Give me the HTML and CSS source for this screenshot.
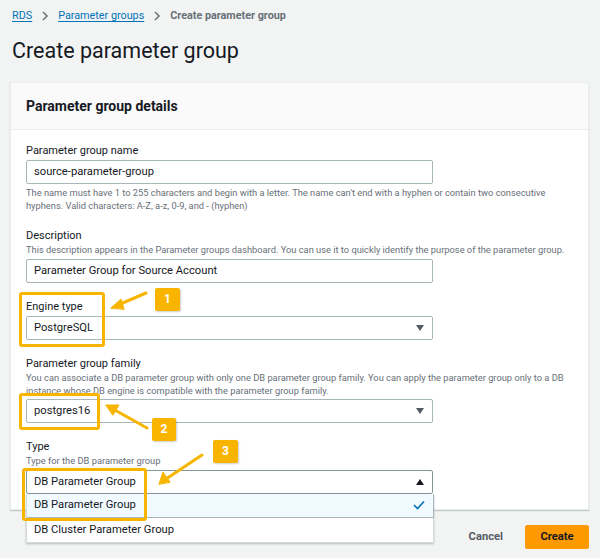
FILE: index.html
```html
<!DOCTYPE html>
<html>
<head>
<meta charset="utf-8">
<link rel="stylesheet" href="styles.css">
</head>
<body>
<div class="page">
  <nav class="crumbs">
    <a class="crumb-link">RDS</a>
    <svg class="chev" width="10" height="10" viewBox="0 0 10 10"><path d="M3 1 L7 5 L3 9" fill="none" stroke="#687078" stroke-width="1.5"/></svg>
    <a class="crumb-link">Parameter groups</a>
    <svg class="chev" width="10" height="10" viewBox="0 0 10 10"><path d="M3 1 L7 5 L3 9" fill="none" stroke="#687078" stroke-width="1.5"/></svg>
    <span class="crumb-current">Create parameter group</span>
  </nav>
  <h1 class="title">Create parameter group</h1>

  <section class="card">
    <div class="card-header">Parameter group details</div>
    <div class="card-body">
      <div class="field">
        <div class="label">Parameter group name</div>
        <div class="input">source-parameter-group</div>
        <div class="help">The name must have 1 to 255 characters and begin with a letter. The name can't end with a hyphen or contain two consecutive hyphens. Valid characters: A-Z, a-z, 0-9, and - (hyphen)</div>
      </div>
      <div class="field">
        <div class="label">Description</div>
        <div class="desc">This description appears in the Parameter groups dashboard. You can use it to quickly identify the purpose of the parameter group.</div>
        <div class="input">Parameter Group for Source Account</div>
      </div>
      <div class="field">
        <div class="label">Engine type</div>
        <div class="input select">PostgreSQL<span class="caret down"></span></div>
      </div>
      <div class="field">
        <div class="label">Parameter group family</div>
        <div class="desc">You can associate a DB parameter group with only one DB parameter group family. You can apply the parameter group only to a DB instance whose DB engine is compatible with the parameter group family.</div>
        <div class="input select">postgres16<span class="caret down"></span></div>
      </div>
      <div class="field">
        <div class="label">Type</div>
        <div class="desc">Type for the DB parameter group</div>
        <div class="select-wrap">
          <div class="input select open">DB Parameter Group<span class="caret up"></span></div>
          <div class="dropdown">
            <div class="option selected">DB Parameter Group
              <svg class="check" width="12" height="10" viewBox="0 0 12 10"><path d="M1 5 L4.5 8.5 L11 1.5" fill="none" stroke="#0073bb" stroke-width="1.6"/></svg>
            </div>
            <div class="option">DB Cluster Parameter Group</div>
          </div>
        </div>
      </div>
    </div>
  </section>

  <div class="actions">
    <button class="btn-link">Cancel</button>
    <button class="btn-primary">Create</button>
  </div>

  <div class="mark box1"></div>
  <div class="mark box2"></div>
  <div class="mark box3"></div>
  <div class="badge b1">1</div>
  <div class="badge b2">2</div>
  <div class="badge b3">3</div>
  <svg class="arrows" width="600" height="558" viewBox="0 0 600 558">
    <g stroke="#f7b500" stroke-width="3" stroke-linecap="round" fill="#f7b500">
      <line x1="146" y1="293" x2="118" y2="305"/>
      <polygon points="111,308 121,299 124,309" stroke-width="1" stroke-linejoin="round"/>
      <line x1="147" y1="428" x2="113" y2="409"/>
      <polygon points="106,405 119,405 113,415" stroke-width="1" stroke-linejoin="round"/>
      <line x1="202" y1="455" x2="166" y2="479"/>
      <polygon points="159,484 163,472 170,482" stroke-width="1" stroke-linejoin="round"/>
    </g>
  </svg>
</div>
</body>
</html>
```

FILE: styles.css
```css
* { box-sizing: border-box; }
html, body { margin: 0; padding: 0; }
body {
  background: #f2f3f3;
  font-family: Roboto, "Liberation Sans", Arial, sans-serif;
  color: #16191f;
  width: 600px;
  height: 558px;
  overflow: hidden;
}
.page {
  position: relative;
  width: 600px;
  height: 558px;
}
.crumbs {
  display: flex;
  align-items: center;
  gap: 7px;
  padding: 8px 0 0 12px;
  height: 24px;
  font-size: 10.8px;
  line-height: 16px;
}
.crumb-link {
  color: #0073bb;
  text-decoration: underline;
  text-underline-offset: 2px;
}
.chev { flex: none; margin: 0 1px; }
.crumb-current {
  color: #687078;
  font-weight: 700;
}
.title {
  margin: 13px 0 0 12px;
  font-size: 21.5px;
  font-weight: 400;
  line-height: 28px;
  color: #16191f;
}
.card {
  margin: 17px 11px 0 10px;
  background: #fff;
  border: 1px solid #eaeded;
  box-shadow: 0 1px 1px rgba(0,28,36,0.2);
}
.card-header {
  background: #fafafa;
  border-bottom: 1px solid #eaeded;
  height: 47px;
  padding: 13px 15px 0;
  font-size: 14px;
  font-weight: 700;
  line-height: 20px;
}
.card-body {
  padding: 13px 15px 15px;
  display: flex;
  flex-direction: column;
  gap: 16px;
}
.field { display: flex; flex-direction: column; }
.label {
  font-size: 11px;
  line-height: 15px;
  color: #16191f;
}
.desc {
  font-size: 9.3px;
  line-height: 13px;
  color: #687078;
  margin-bottom: 0.6px;
}
.help {
  font-size: 9.3px;
  line-height: 12.5px;
  color: #687078;
  margin-top: 3px;
}
.input {
  width: 407px;
  height: 24px;
  border: 1px solid #aab7b8;
  border-radius: 2px;
  background: #fff;
  font-size: 11.2px;
  line-height: 22px;
  padding: 0 7px;
  margin-top: 2px;
  position: relative;
}
.select { display: flex; align-items: center; justify-content: space-between; }
.select.open { border-color: #879596; }
.caret {
  width: 0; height: 0;
  border-left: 4.5px solid transparent;
  border-right: 4.5px solid transparent;
  margin-right: 1px;
}
.caret.down { border-top: 6px solid #545b64; }
.caret.up { border-bottom: 6px solid #16191f; }
.select-wrap { position: relative; }
.dropdown {
  position: absolute;
  left: 0;
  top: 26px;
  width: 408px;
  background: #fff;
  border: 1px solid #d5dbdb;
  border-top: none;
  box-shadow: 0 1px 2px rgba(0,28,36,0.25);
  z-index: 5;
}
.option {
  height: 24px;
  padding: 0 7px;
  font-size: 11.2px;
  line-height: 24px;
  display: flex;
  align-items: center;
  justify-content: space-between;
}
.option.selected {
  background: #f1faff;
  border-bottom: 1px solid #aab7b8;
  border-right: 1px solid #aab7b8;
  margin-right: -1px;
}
.check { margin-right: 1px; }
.actions {
  display: flex;
  justify-content: flex-end;
  align-items: center;
  gap: 22px;
  margin: 15px 11px 0 0;
}
.btn-link {
  border: none;
  background: none;
  font-family: inherit;
  font-size: 11.2px;
  font-weight: 700;
  color: #545b64;
  padding: 0;
}
.btn-primary {
  width: 64px;
  height: 24px;
  border: none;
  border-radius: 2px;
  background: #ff9900;
  font-family: inherit;
  font-size: 11.2px;
  font-weight: 700;
  color: #16191f;
  padding: 0;
}
.mark {
  position: absolute;
  border: 3px solid #f7b500;
  border-radius: 3px;
  z-index: 10;
}
.box1 { left: 19px; top: 292px; width: 86px; height: 55px; }
.box2 { left: 19px; top: 393px; width: 81px; height: 37px; }
.box3 { left: 22px; top: 468px; width: 125px; height: 53px; }
.badge {
  position: absolute;
  background: #f9b400;
  color: #fff;
  font-size: 12px;
  font-weight: 700;
  text-align: center;
  line-height: 23px;
  border-radius: 2px;
  box-shadow: 1px 1px 2px rgba(0,0,0,0.2);
  z-index: 10;
}
.b1 { left: 155px; top: 288px; width: 25px; height: 23px; }
.b2 { left: 152px; top: 418px; width: 24px; height: 23px; }
.b3 { left: 213px; top: 440px; width: 25px; height: 23px; }
.arrows {
  position: absolute;
  left: 0;
  top: 0;
  z-index: 11;
  pointer-events: none;
}
```
